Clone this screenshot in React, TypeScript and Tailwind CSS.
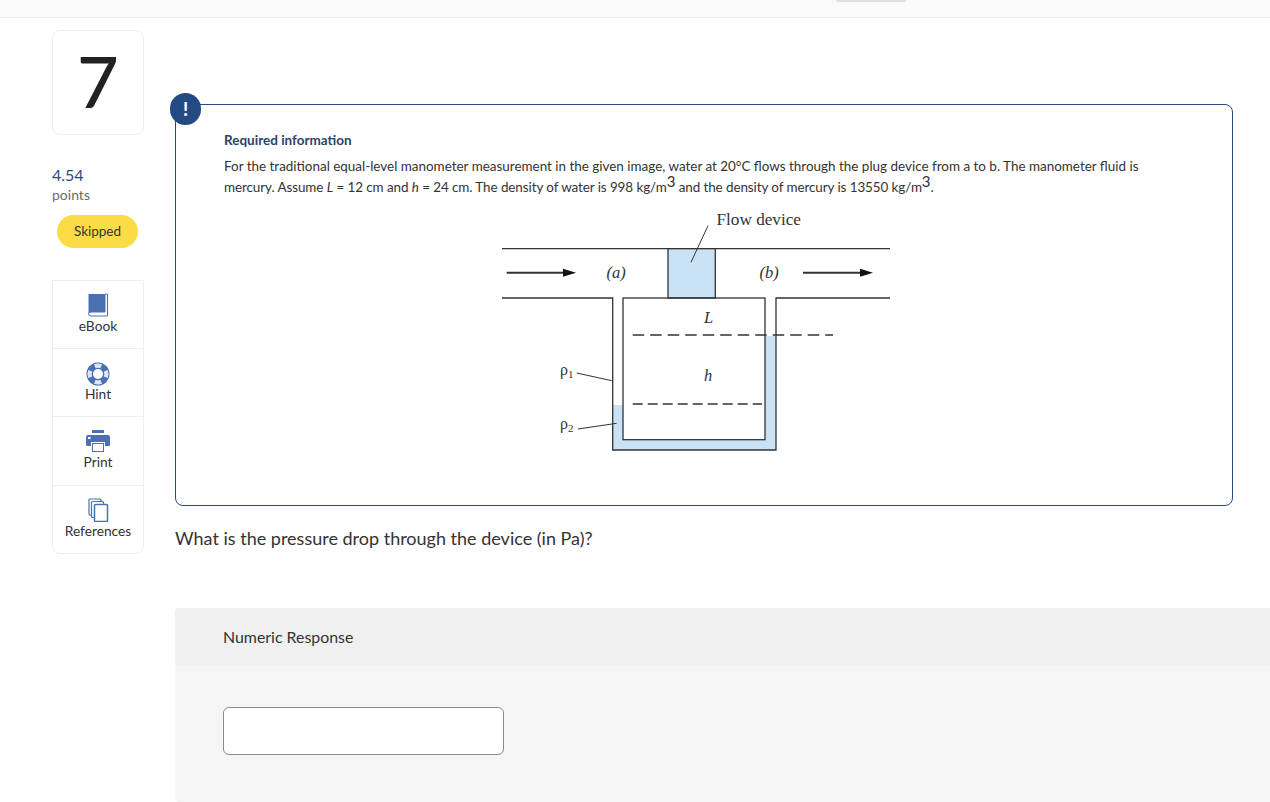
const iconColor = "#4a71b4";

function BookIcon() {
  return (
    <svg width="22" height="24" viewBox="0 0 22 24">
      <path d="M1.5 1h16.5v18H4.5a3 3 0 0 0-3 2.5z" fill={iconColor} />
      <path d="M1.5 20.5a2.5 2.5 0 0 1 2.5-1.5h14V1h2.5v22H4a2.5 2.5 0 0 1-2.5-2.5z" fill="none" stroke={iconColor} strokeWidth="1" />
    </svg>
  );
}

function HintIcon() {
  return (
    <svg width="24" height="24" viewBox="0 0 24 24">
      <circle cx="12" cy="12" r="11.5" fill={iconColor} />
      <circle cx="12" cy="12" r="5" fill="#fff" />
      <path d="M8 2.2a11 11 0 0 1 8 0l-1.6 4a6 6 0 0 0-4.8 0zM8 21.8a11 11 0 0 0 8 0l-1.6-4a6 6 0 0 1-4.800 0zM2.200 8a11 11 0 0 0 0 8l4-1.600a6 6 0 0 1 0-4.800zM21.800 8a11 11 0 0 1 0 8l-4-1.600a6 6 0 0 0 0-4.800z" fill="#dfe6f3" />
    </svg>
  );
}

function PrintIcon() {
  return (
    <svg width="24" height="22" viewBox="0 0 24 22">
      <rect x="6" y="0" width="12" height="3" fill={iconColor} />
      <path d="M2 5h20a2 2 0 0 1 2 2v8a1 1 0 0 1-1 1h-4v-4H5v4H1a1 1 0 0 1-1-1V7a2 2 0 0 1 2-2z" fill={iconColor} />
      <rect x="2" y="7" width="2.500" height="2" fill="#fff" />
      <rect x="6.500" y="13.500" width="11" height="8" fill="#fff" stroke={iconColor} strokeWidth="1" />
    </svg>
  );
}

function ReferencesIcon() {
  return (
    <svg width="21" height="24" viewBox="0 0 21 24" fill="#fff" stroke={iconColor} strokeWidth="1.200">
      <rect x="1" y="1" width="12" height="16" rx="1" />
      <rect x="3.500" y="3.500" width="12" height="16" rx="1" />
      <rect x="6.500" y="6.500" width="13" height="17" rx="1" strokeWidth="1.500" />
    </svg>
  );
}

function ManometerDiagram() {
  const serif = "'Liberation Serif', serif";
  return (
    <svg width="410" height="255" viewBox="0 0 410 255" className="block">
      <rect x="123" y="200" width="10" height="45" fill="#c9e2f5" />
      <rect x="123" y="235" width="163" height="10" fill="#c9e2f5" />
      <rect x="275" y="131" width="11" height="104" fill="#c9e2f5" />
      <g stroke="#333" fill="none" strokeWidth="1.300">
        <path d="M12 43.700H400" />
        <path d="M12 93H122.700V245H286V93H400" />
        <rect x="178" y="43.700" width="47.300" height="49.300" fill="#c9e2f5" />
        <rect x="133" y="93" width="142" height="141.700" />
        <path d="M218 20.700L201 57.300" strokeWidth="1" />
        <path d="M86.700 168L121.700 175.700" strokeWidth="1" />
        <path d="M88 224L126.700 218.300" strokeWidth="1" />
        <path d="M142.700 130H343" strokeDasharray="11.500 6" strokeWidth="1.300" />
        <path d="M142.700 199H272" strokeDasharray="10 5" strokeWidth="1.300" />
        <path d="M16.700 67.700H76" strokeWidth="2" />
        <path d="M313 67.700H374" strokeWidth="2" />
      </g>
      <path d="M73 63.700L86 67.700L73 71.700z" fill="#111" />
      <path d="M370 63.700L383 67.700L370 71.700z" fill="#111" />
      <g fill="#333" fontFamily={serif}>
        <text x="226.500" y="20" fontSize="17.200">Flow device</text>
        <text x="116.500" y="73" fontSize="16.500" fontStyle="italic">(a)</text>
        <text x="269.500" y="73" fontSize="16.500" fontStyle="italic">(b)</text>
        <text x="214" y="118" fontSize="16.500" fontStyle="italic">L</text>
        <text x="214" y="176" fontSize="16.500" fontStyle="italic">h</text>
        <text x="70" y="170" fontSize="16">ρ<tspan fontSize="11" dy="3">1</tspan></text>
        <text x="70" y="224" fontSize="16">ρ<tspan fontSize="11" dy="3">2</tspan></text>
      </g>
    </svg>
  );
}

const tools = [
  { label: "eBook", icon: BookIcon, row: "h-[67px] pb-[14px]", gap: "mt-px" },
  { label: "Hint", icon: HintIcon, row: "h-[68px] pb-[14px] border-t border-[#eeeeee]", gap: "mt-0" },
  { label: "Print", icon: PrintIcon, row: "h-[69px] pb-[15px] border-t border-[#eeeeee]", gap: "mt-0.5" },
  { label: "References", icon: ReferencesIcon, row: "h-[68px] pb-[14px] border-t border-[#eeeeee]", gap: "mt-px" },
];

export default function App() {
  return (
    <div className="h-[802px] w-[1270px] overflow-hidden bg-white text-[#333] font-['Lato','Open_Sans',sans-serif]">
      {/* top bar */}
      <div className="flex h-[18px] justify-center border-b border-[#eeeeee] bg-[#fafafa] pl-[472px]">
        <div className="h-[2px] w-[70px] rounded-b-lg bg-[#dedede]" />
      </div>

      <div className="flex">
        {/* left rail */}
        <div className="ml-[52px] w-[92px] shrink-0 pt-3">
          <div className="flex h-[105px] items-center justify-center rounded-lg border border-[#eeeeee] pb-1.5">
            <span className="text-[72px] font-medium leading-none text-[#222]">7</span>
          </div>
          <div className="mt-[30px] text-base leading-5 text-[#2d4a7c]">4.54</div>
          <div className="text-sm leading-5 text-[#6b6b6b]">points</div>
          <div className="ml-[5px] mt-[10px] flex h-[33px] w-[81px] items-center justify-center rounded-full bg-[#f9dc46] text-[13.500px] text-[#333]">
            Skipped
          </div>
          <div className="mt-8 overflow-hidden rounded-b-lg border border-[#eeeeee]">
            {tools.map((tool, index) => {
              const Icon = tool.icon;
              return (
                <div
                  key={index}
                  className={`flex flex-col items-center justify-end text-[13.750px] leading-4 text-[#333] ${tool.row}`}
                >
                  <Icon />
                  <span className={tool.gap}>{tool.label}</span>
                </div>
              );
            })}
          </div>
        </div>

        {/* question column */}
        <div className="ml-[31px] min-w-0 flex-1 pt-[86px]">
          <div className="relative mr-[37px] h-[402px] rounded-lg border border-[#234a82] pl-[48px] pt-[25px]">
            <div className="absolute -left-[6px] -top-[12px] flex h-8 w-[31px] items-center justify-center rounded-full bg-[#234a82] text-lg font-black text-white">
              !
            </div>
            <div className="text-[13.500px] font-bold leading-5 text-[#2c4468]">Required information</div>
            <p className="mt-1.5 text-[13.440px] leading-[21px] text-[#333]">
              For the traditional equal-level manometer measurement in the given image, water at 20°C flows through the plug device from a to b. The manometer fluid is
              <br />
              <span className="tracking-[-0.08px]">
                mercury. Assume <i>L</i> = 12 cm and <i>h</i> = 24 cm. The density of water is 998 kg/m<sup className="-top-[5px] text-[15px] leading-none">3</sup> and the density of mercury is 13550 kg/m<sup className="-top-[5px] text-[15px] leading-none">3</sup>.
              </span>
            </p>
            <div className="ml-[266px] mt-[7px]">
              <ManometerDiagram />
            </div>
          </div>

          <p className="mt-5 text-[18px] leading-6 text-[#333]">What is the pressure drop through the device (in Pa)?</p>

          <div className="mt-[58px] h-[194px] rounded-l bg-[#f5f5f5]">
            <div className="flex h-[57px] items-center rounded-tl bg-[#f0f0f0] pl-[48px] text-[15.900px] text-[#333]">Numeric Response</div>
            <div className="pl-[48px] pt-[42px]">
              <input type="text" className="block h-[48px] w-[281px] rounded-md border border-[#8a8a8a] bg-white" />
            </div>
          </div>
        </div>
      </div>
    </div>
  );
}
